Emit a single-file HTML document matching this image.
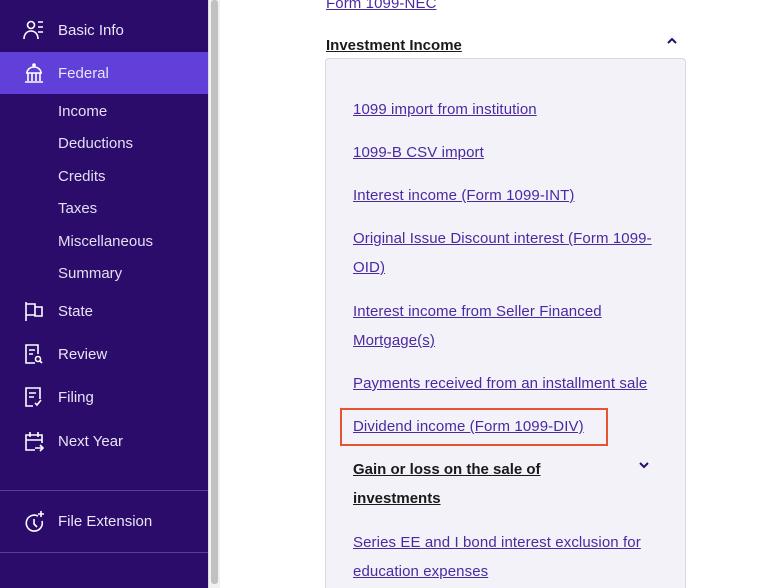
<!DOCTYPE html>
<html style="overflow:hidden;height:588px"><head><style>
*{margin:0;padding:0;box-sizing:border-box}
body{width:768px;height:588px;overflow:hidden;background:#fff;font-family:"Liberation Sans",sans-serif;position:relative}
#sb{position:absolute;left:0;top:0;width:208px;height:588px;background:#2c0c6b;color:#e9e4f7}
.it{position:absolute;left:0;width:208px;height:42px;display:flex;align-items:center;font-size:15px}
.it svg{position:absolute;left:23px;width:22px;height:22px}
.it span{position:absolute;left:58px}
.sub{position:absolute;left:58px;font-size:15px;color:#e4def4}
#scr{position:absolute;left:208px;top:0;width:12px;height:588px;background:#f1f1f1;border-left:1px solid #ddd}
#scr div{position:absolute;left:2px;top:0;width:7px;height:584px;background:#c1c1c1;border-radius:3px}
a,.l{color:#4b2aa0;text-decoration:underline;font-size:15px;position:absolute;line-height:29px;letter-spacing:0.1px}
.h{color:#1a1a1a;font-weight:bold;text-decoration:underline;font-size:15px;position:absolute;line-height:29px}
#panel{position:absolute;left:325px;top:58px;width:361px;height:530px;background:#f3f2f9;border:1px solid #d9d7e6;border-bottom:none;border-radius:4px 4px 0 0}
</style></head><body>
<div id="sb">
<div class="it" style="top:9px"><svg viewBox="0 0 22 22" fill="none" stroke="#fff" stroke-width="1.6"><circle cx="8" cy="6" r="3.5"/><path d="M1 20c0-5 3-8 7-8s7 3 7 8M15 3h5M15 8h5M15 13h5"/></svg><span>Basic Info</span></div>
<div class="it" style="top:52px;background:#6040d8"><svg viewBox="0 0 22 22" fill="none" stroke="#fff" stroke-width="1.6"><path d="M11 2v3M4 11a7 6 0 0 1 14 0zM3 11h16M5 11v8M9 11v8M13 11v8M17 11v8M2 20h18"/><circle cx="11" cy="3" r="1"/></svg><span>Federal</span></div>
<div class="sub" style="top:103px">Income</div>
<div class="sub" style="top:135px">Deductions</div>
<div class="sub" style="top:168px">Credits</div>
<div class="sub" style="top:200px">Taxes</div>
<div class="sub" style="top:233px">Miscellaneous</div>
<div class="sub" style="top:265px">Summary</div>
<div class="it" style="top:290px"><svg viewBox="0 0 22 22" fill="none" stroke="#fff" stroke-width="1.6"><path d="M3 2v19M3 4h9v11H3M12 7h7v9h-7z"/></svg><span>State</span></div>
<div class="it" style="top:333px"><svg viewBox="0 0 22 22" fill="none" stroke="#fff" stroke-width="1.6"><path d="M12 20H3V2h12v9M6 7h6M6 11h4"/><circle cx="15" cy="16" r="2.5"/><path d="M17 18l2 2"/></svg><span>Review</span></div>
<div class="it" style="top:376px"><svg viewBox="0 0 22 22" fill="none" stroke="#fff" stroke-width="1.6"><path d="M10 20H3V2h14v11M6 7h7M6 11h5M12 17l2 2 4-5"/></svg><span>Filing</span></div>
<div class="it" style="top:420px"><svg viewBox="0 0 22 22" fill="none" stroke="#fff" stroke-width="1.6"><path d="M12 20H3V5h16v8M3 10h16M7 2v5M15 2v5M12 18h8M17 15l3 3-3 3"/></svg><span>Next Year</span></div>
<div style="position:absolute;top:490px;left:0;width:208px;height:1px;background:#5a3f94"></div>
<div class="it" style="top:500px"><svg viewBox="0 0 22 22" fill="none" stroke="#fff" stroke-width="1.6"><path d="M15 6a8 8 0 1 0 4 5M11 9v5l3 3M18 1v6M15 4h6"/></svg><span>File Extension</span></div>
<div style="position:absolute;top:552px;left:0;width:208px;height:1px;background:#5a3f94"></div>
</div>
<div id="scr"><div></div></div>
<a style="left:326px;top:-11px">Form 1099-NEC</a>
<div class="h" style="left:326px;top:31px">Investment Income</div>
<svg style="position:absolute;left:666px;top:37px" width="12" height="8" viewBox="0 0 12 8"><path d="M2 6l4-4 4 4" fill="none" stroke="#2c0c6b" stroke-width="2"/></svg>
<div id="panel"></div>
<a style="left:353px;top:95px">1099 import from institution</a>
<a style="left:353px;top:138px">1099-B CSV import</a>
<a style="left:353px;top:181px">Interest income (Form 1099-INT)</a>
<a style="left:353px;top:224px;width:310px">Original Issue Discount interest (Form 1099-OID)</a>
<a style="left:353px;top:297px;width:300px">Interest income from Seller Financed Mortgage(s)</a>
<a style="left:353px;top:369px">Payments received from an installment sale</a>
<div style="position:absolute;left:340px;top:408px;width:268px;height:38px;border:2px solid #e8532f"></div>
<a style="left:353px;top:412px">Dividend income (Form 1099-DIV)</a>
<div class="h" style="left:353px;top:455px;width:220px">Gain or loss on the sale of investments</div>
<svg style="position:absolute;left:638px;top:461px" width="12" height="8" viewBox="0 0 12 8"><path d="M2 2l4 4 4-4" fill="none" stroke="#2c0c6b" stroke-width="2"/></svg>
<a style="left:353px;top:528px;width:300px">Series EE and I bond interest exclusion for education expenses</a>
</body></html>
